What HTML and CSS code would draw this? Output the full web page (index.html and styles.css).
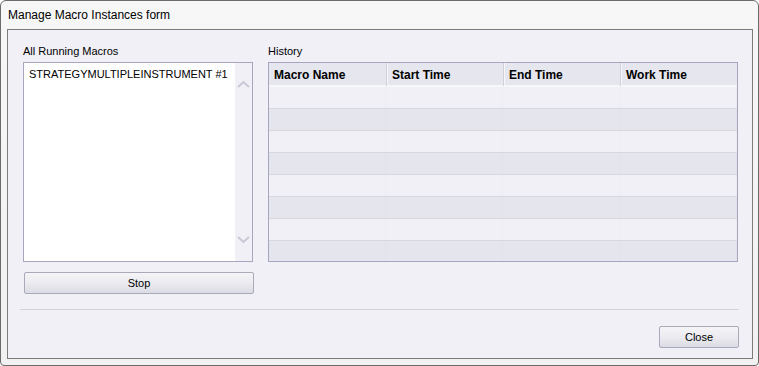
FILE: index.html
```html
<!DOCTYPE html>
<html lang="en">
<head>
    <meta charset="UTF-8">
    <title>Manage Macro Instances form</title>
    <link rel="stylesheet" href="styles.css">
</head>
<body>
    <div class="window">
        <div class="title">Manage Macro Instances form</div>
        <div class="client">
            <div class="panels">
                <div class="panel left">
                    <div class="label">All Running Macros</div>
                    <div class="listbox">
                        <div class="items">
                            <div class="item">STRATEGYMULTIPLEINSTRUMENT #1</div>
                        </div>
                        <div class="scrollbar">
                            <svg width="17" height="12" viewBox="0 0 17 12"><polyline points="3,8 8.5,3 14,8" fill="none" stroke="#c9c9d6" stroke-width="2"/></svg>
                            <svg width="17" height="12" viewBox="0 0 17 12"><polyline points="3,4 8.5,9 14,4" fill="none" stroke="#c9c9d6" stroke-width="2"/></svg>
                        </div>
                    </div>
                    <button class="btn stop">Stop</button>
                </div>
                <div class="panel right">
                    <div class="label">History</div>
                    <div class="grid">
                        <div class="row head">
                            <div class="cell">Macro Name</div>
                            <div class="cell">Start Time</div>
                            <div class="cell">End Time</div>
                            <div class="cell">Work Time</div>
                        </div>
                        <div class="row"><div class="cell"></div><div class="cell"></div><div class="cell"></div><div class="cell"></div></div>
                        <div class="row alt"><div class="cell"></div><div class="cell"></div><div class="cell"></div><div class="cell"></div></div>
                        <div class="row"><div class="cell"></div><div class="cell"></div><div class="cell"></div><div class="cell"></div></div>
                        <div class="row alt"><div class="cell"></div><div class="cell"></div><div class="cell"></div><div class="cell"></div></div>
                        <div class="row"><div class="cell"></div><div class="cell"></div><div class="cell"></div><div class="cell"></div></div>
                        <div class="row alt"><div class="cell"></div><div class="cell"></div><div class="cell"></div><div class="cell"></div></div>
                        <div class="row"><div class="cell"></div><div class="cell"></div><div class="cell"></div><div class="cell"></div></div>
                        <div class="row alt"><div class="cell"></div><div class="cell"></div><div class="cell"></div><div class="cell"></div></div>
                    </div>
                </div>
            </div>
            <div class="separator"></div>
            <div class="footer">
                <button class="btn close">Close</button>
            </div>
        </div>
    </div>
</body>
</html>
```

FILE: styles.css
```css
body {
    margin: 0;
    font-family: "Liberation Sans", Arial, sans-serif;
    background: #ffffff;
    color: #000;
}

.window {
    width: 759px;
    height: 366px;
    box-sizing: border-box;
    border: 1px solid #6b6b6b;
    border-radius: 6px 6px 4px 4px;
    background: linear-gradient(to bottom, #f7f7f7, #f1f1f1);
    padding: 0 5px 6px 6px;
    display: flex;
    flex-direction: column;
}

.title {
    height: 28px;
    line-height: 28px;
    font-size: 12px;
    padding-left: 1px;
    color: #000;
}

.client {
    flex: 1;
    border: 1px solid #7c7c7c;
    background: #f1f0f7;
    padding: 14px 13px 10px 15px;
    display: flex;
    flex-direction: column;
}

.panels {
    display: flex;
    gap: 15px;
}

.panel {
    display: flex;
    flex-direction: column;
}

.panel.left {
    width: 230px;
}

.panel.right {
    width: 470px;
}

.label {
    font-size: 11px;
    line-height: 14px;
    height: 14px;
    margin-bottom: 4px;
}

.listbox {
    height: 200px;
    box-sizing: border-box;
    border: 1px solid #a6a6bf;
    background: #fff;
    display: flex;
}

.items {
    flex: 1;
    padding: 4px 0 0 5px;
}

.item {
    font-size: 11px;
    line-height: 14px;
    white-space: nowrap;
}

.scrollbar {
    width: 17px;
    background: #f1f0f7;
    display: flex;
    flex-direction: column;
    justify-content: space-between;
    padding: 16px 0 16px 0;
}

.btn {
    height: 22px;
    box-sizing: border-box;
    border: 1px solid #a9a9ba;
    border-radius: 2px;
    background: linear-gradient(to bottom, #f5f5f8 0%, #ebebf0 50%, #dcdce4 100%);
    font-family: "Liberation Sans", Arial, sans-serif;
    font-size: 11px;
    color: #000;
    padding: 0;
}

.stop {
    margin-top: 10px;
    width: 230px;
    margin-left: 1px;
}

.grid {
    height: 200px;
    box-sizing: border-box;
    border: 1px solid #a6a6bf;
    overflow: hidden;
    background: #f1f0f7;
}

.row {
    display: grid;
    grid-template-columns: 117px 117px 117px 117px;
    height: 22px;
    box-sizing: border-box;
    border-bottom: 1px solid #d7d7df;
}

.row.alt {
    background: #e5e5ee;
}

.row .cell {
    border-right: 1px solid #ececf3;
}

.row.alt .cell {
    border-right-color: #e1e1ea;
}

.row.head {
    height: 24px;
    background: #e6e6ee;
    border-bottom: 2px solid #f7f7fa;
}

.row.head .cell {
    font-size: 12px;
    font-weight: bold;
    line-height: 22px;
    padding: 1px 0 0 5px;
    border-right: none;
    border-left: 1px solid #d0d0da;
    box-shadow: inset 1px 0 0 #f7f7fa;
}

.row.head .cell:first-child {
    border-left: none;
    box-shadow: none;
}

.separator {
    height: 1px;
    background: #d3d3dc;
    margin: 15px 0 0 -3px;
}

.footer {
    display: flex;
    justify-content: flex-end;
    margin-top: 16px;
}

.close {
    width: 80px;
}
```
